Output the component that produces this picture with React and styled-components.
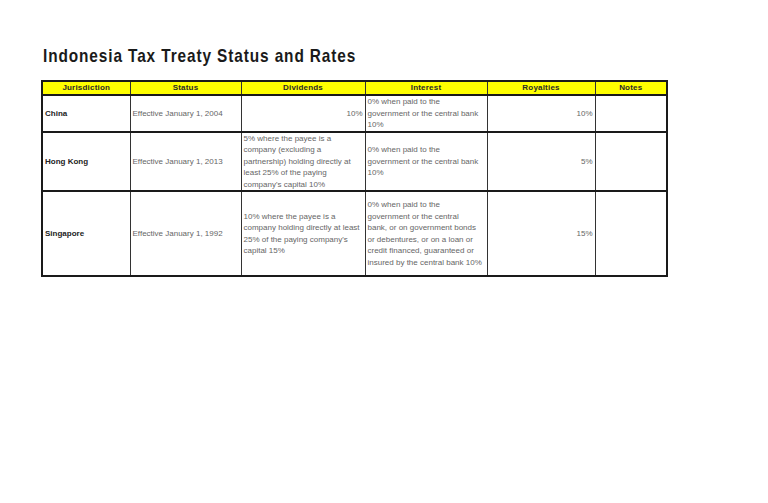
import React from 'react';
import styled, { createGlobalStyle } from 'styled-components';

const GlobalStyle = createGlobalStyle`
  html, body { margin: 0; padding: 0; background: #fff; }
  body { font-family: "Liberation Sans", Arial, sans-serif; }
`;

const Page = styled.div`
  width: 768px;
  height: 503px;
  padding: 45px 0 0 41px;
  box-sizing: border-box;
  background: #fff;
`;

const Title = styled.h1`
  margin: 0 0 13px 2px;
  font-family: "Liberation Sans", Arial, sans-serif;
  font-size: 19px;
  font-weight: bold;
  letter-spacing: 1.1px;
  color: #1a1a1a;
  line-height: 22px;
  transform: scaleX(0.81);
  transform-origin: left center;
`;

const Table = styled.table`
  border-collapse: collapse;
  table-layout: fixed;
  width: 625px;
  border: 2px solid #1a1a1a;
`;

const Head = styled.th`
  background: #ffff00;
  height: 12px;
  padding: 0;
  font-size: 8px;
  font-weight: bold;
  letter-spacing: 0.2px;
  color: #2a2a2a;
  text-align: center;
  border-left: 1px solid #333;
  border-bottom: 2px solid #1a1a1a;
  line-height: 12px;
`;

const Row = styled.tr`
  height: ${p => p.h}px;
  border-bottom: 2px solid #1a1a1a;
`;

const Cell = styled.td`
  padding: 0 2px;
  font-size: 8px;
  line-height: 11.5px;
  letter-spacing: 0;
  color: ${p => (p.strong ? '#222' : '#666')};
  font-weight: ${p => (p.strong ? 'bold' : 'normal')};
  text-align: ${p => (p.right ? 'right' : 'left')};
  vertical-align: middle;
  border-left: 1px solid #333;
  white-space: nowrap;
`;

const rows = [
  {
    h: 33,
    name: 'China',
    status: 'Effective January 1, 2004',
    div: '10%',
    divRight: true,
    interest: ['0% when paid to the', 'government or the central bank', '10%'],
    roy: '10%',
  },
  {
    h: 59,
    name: 'Hong Kong',
    status: 'Effective January 1, 2013',
    div: [
      '5% where the payee is a',
      'company (excluding a',
      'partnership) holding directly at',
      'least 25% of the paying',
      "company's capital 10%",
    ],
    interest: ['0% when paid to the', 'government or the central bank', '10%'],
    roy: '5%',
  },
  {
    h: 85,
    name: 'Singapore',
    status: 'Effective January 1, 1992',
    div: [
      '10% where the payee is a',
      'company holding directly at least',
      "25% of the paying company's",
      'capital 15%',
    ],
    interest: [
      '0% when paid to the',
      'government or the central',
      'bank, or on government bonds',
      'or debentures, or on a loan or',
      'credit financed, guaranteed or',
      'insured by the central bank 10%',
    ],
    roy: '15%',
  },
];

const Lines = ({ text }) =>
  Array.isArray(text)
    ? text.map((t, i) => (
        <React.Fragment key={i}>
          {t}
          {i < text.length - 1 && <br />}
        </React.Fragment>
      ))
    : text;

export default function App() {
  return (
    <>
      <GlobalStyle />
      <Page>
        <Title>Indonesia Tax Treaty Status and Rates</Title>
        <Table>
          <colgroup>
            <col style={{ width: 88 }} />
            <col style={{ width: 111 }} />
            <col style={{ width: 124 }} />
            <col style={{ width: 122 }} />
            <col style={{ width: 108 }} />
            <col style={{ width: 72 }} />
          </colgroup>
          <thead>
            <tr>
              <Head>Jurisdiction</Head>
              <Head>Status</Head>
              <Head>Dividends</Head>
              <Head>Interest</Head>
              <Head>Royalties</Head>
              <Head>Notes</Head>
            </tr>
          </thead>
          <tbody>
            {rows.map(r => (
              <Row key={r.name} h={r.h}>
                <Cell strong>{r.name}</Cell>
                <Cell>{r.status}</Cell>
                <Cell right={r.divRight}>
                  <Lines text={r.div} />
                </Cell>
                <Cell>
                  <Lines text={r.interest} />
                </Cell>
                <Cell right>{r.roy}</Cell>
                <Cell />
              </Row>
            ))}
          </tbody>
        </Table>
      </Page>
    </>
  );
}
